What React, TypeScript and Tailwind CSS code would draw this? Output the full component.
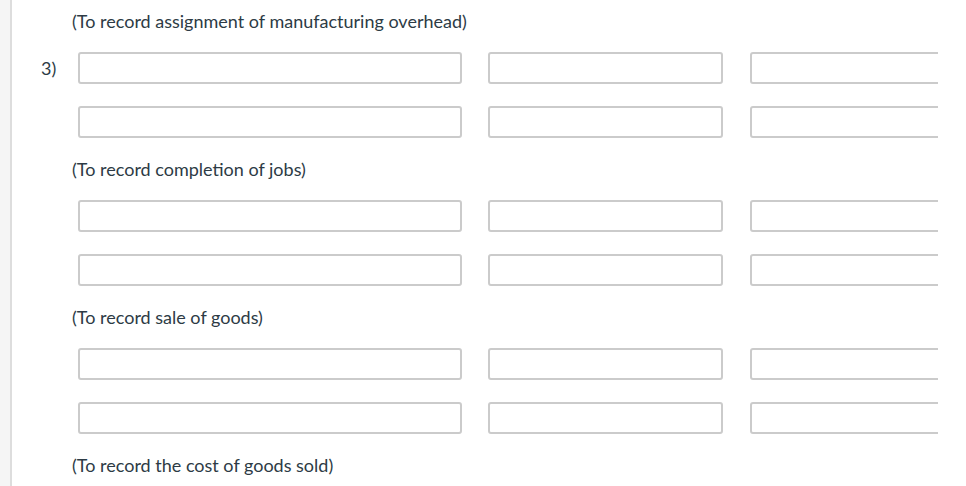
import React from "react";

const Box = ({ w }: { w: string }) => (
  <div className={`${w} h-[32px] shrink-0 rounded-[3px] border-2 border-[#cbcbcb] bg-white`} />
);

const Row = ({ num }: { num?: string }) => (
  <div className="flex h-[32px] items-center">
    <div className="w-[66px] shrink-0 pl-[29px] text-[18px] leading-6 text-[#2d3b45]">{num}</div>
    <Box w="w-[384px]" />
    <div className="w-[26px] shrink-0" />
    <Box w="w-[235px]" />
    <div className="w-[27px] shrink-0" />
    <Box w="w-[220px]" />
  </div>
);

const Section = ({ label, num, last }: { label: string; num?: string; last?: boolean }) => (
  <div className="flex flex-col">
    <div className="h-6 whitespace-nowrap pl-[60px] text-[18px] leading-6 text-[#2d3b45]">{label}</div>
    {!last && (
      <>
        <div className="h-[19px]" />
        <Row num={num} />
        <div className="h-[22px]" />
        <Row />
        <div className="h-[19px]" />
      </>
    )}
  </div>
);

export default function App() {
  return (
    <div
      className="flex h-[486px] w-[966px] overflow-hidden bg-white"
      style={{ fontFamily: "Lato, 'Open Sans', sans-serif" }}
    >
      <div className="h-full w-[12px] shrink-0 border-r-2 border-[#dddddd] bg-[#f5f5f5]" />
      <div className="w-[926px] shrink-0 overflow-hidden pt-[9px]">
        <Section label="(To record assignment of manufacturing overhead)" num="3)" />
        <Section label="(To record completion of jobs)" />
        <Section label="(To record sale of goods)" />
        <Section label="(To record the cost of goods sold)" last />
      </div>
    </div>
  );
}
